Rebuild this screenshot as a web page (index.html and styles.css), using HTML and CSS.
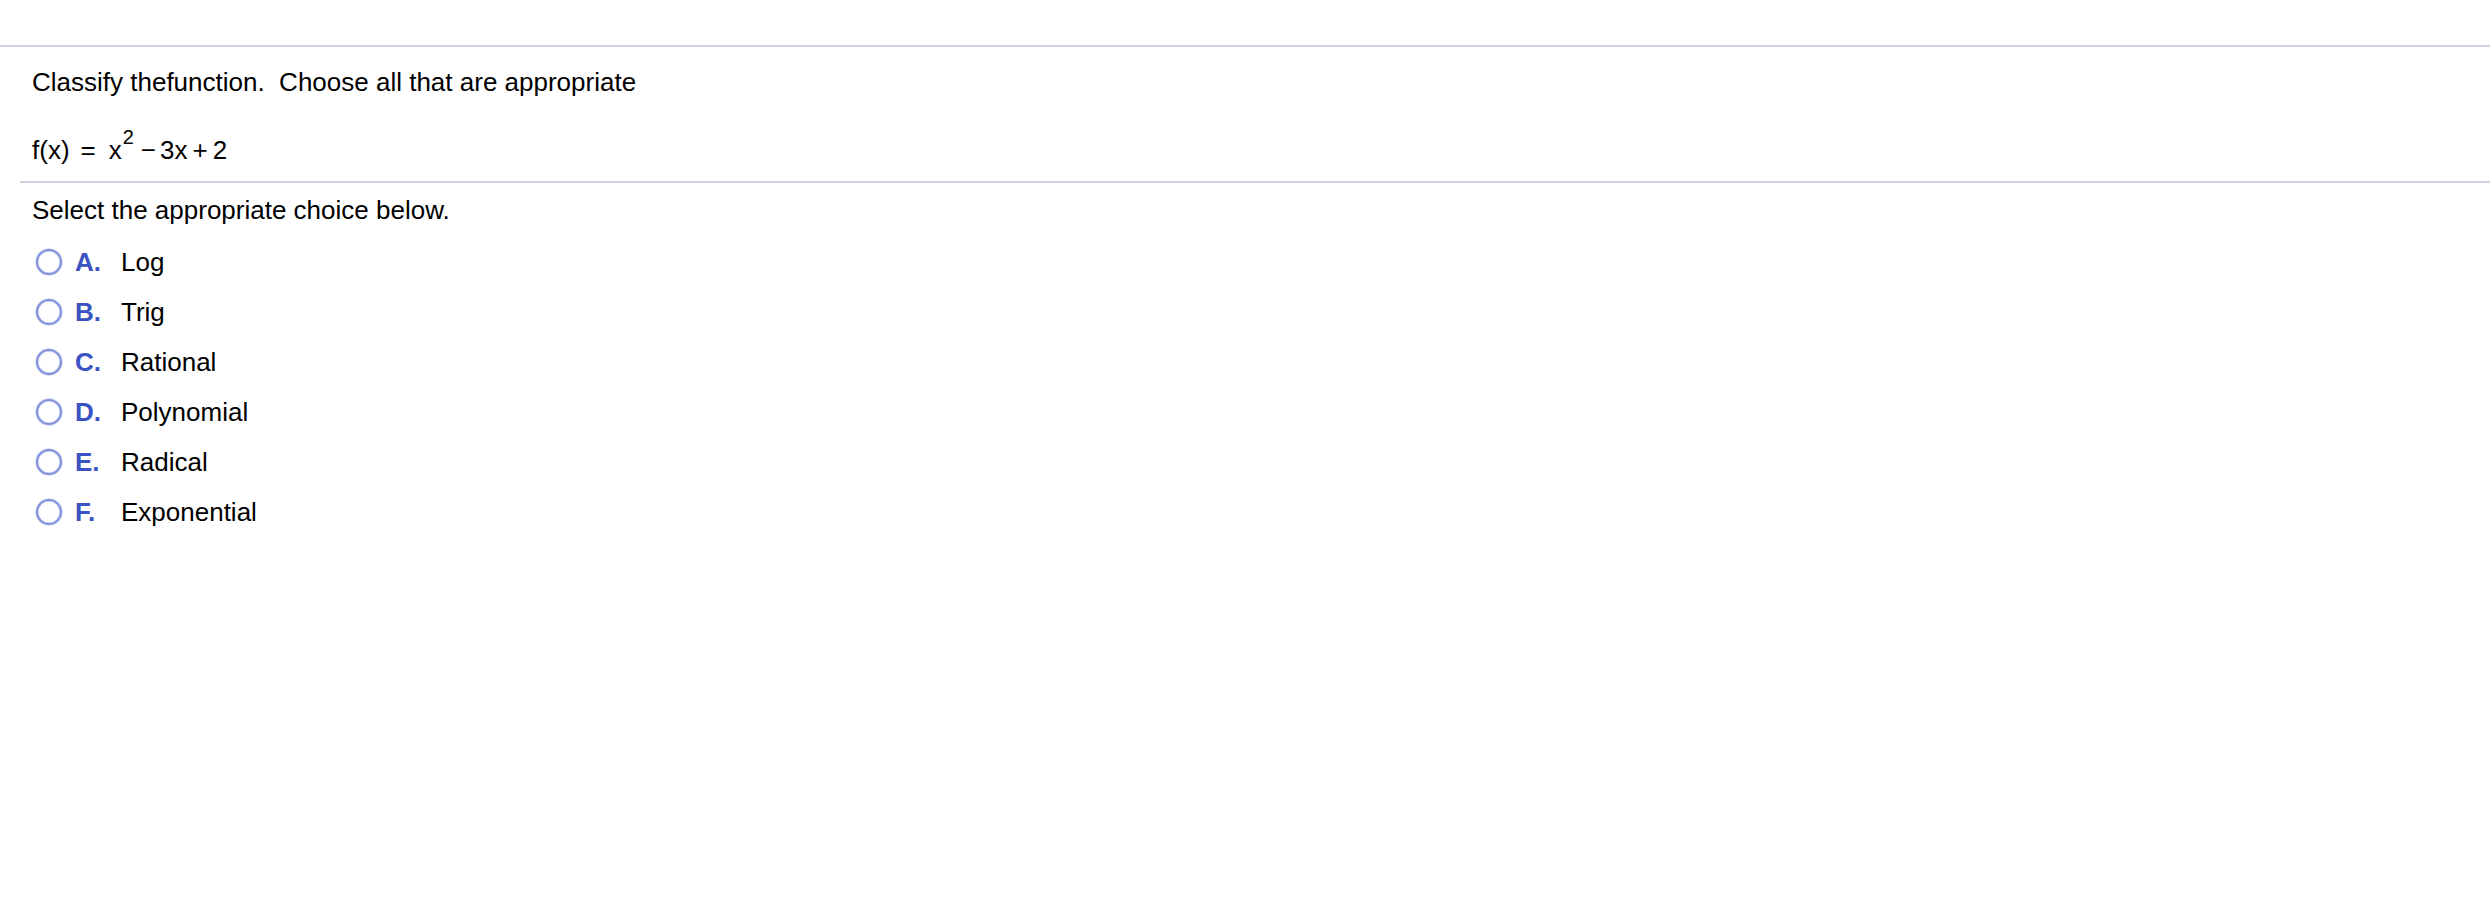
FILE: index.html
```html
<!DOCTYPE html>
<html>
<head>
<meta charset="utf-8">
<link rel="stylesheet" href="styles.css">
</head>
<body>
<div class="rule rule-top"></div>
<div class="question">
  <p class="prompt">Classify thefunction.&nbsp; Choose all that are appropriate</p>
  <p class="formula"><span>f(x)</span><span class="eq">=</span><span class="var">x</span><sup class="sup">2</sup><span class="op">−</span><span class="term">3x</span><span class="op plus">+</span><span>2</span></p>
</div>
<div class="rule rule-inner"></div>
<div class="answers">
  <p class="instruction">Select the appropriate choice below.</p>
  <ul class="choices">
    <li class="choice"><span class="radio"></span><span class="letter">A.</span><span class="text">Log</span></li>
    <li class="choice"><span class="radio"></span><span class="letter">B.</span><span class="text">Trig</span></li>
    <li class="choice"><span class="radio"></span><span class="letter">C.</span><span class="text">Rational</span></li>
    <li class="choice"><span class="radio"></span><span class="letter">D.</span><span class="text">Polynomial</span></li>
    <li class="choice"><span class="radio"></span><span class="letter">E.</span><span class="text">Radical</span></li>
    <li class="choice"><span class="radio"></span><span class="letter">F.</span><span class="text">Exponential</span></li>
  </ul>
</div>
</body>
</html>
```
FILE: styles.css
```css
html, body {
  margin: 0;
  padding: 0;
  background: #ffffff;
}
body {
  font-family: "Liberation Sans", Arial, sans-serif;
  font-size: 26px;
  line-height: 29px;
  color: #000000;
}
p {
  margin: 0;
}
.rule {
  height: 2px;
  background: #cfd2dc;
}
.rule-top {
  margin-top: 45px;
}
.question {
  padding: 21px 0 0 32px;
}
.prompt {
  height: 29px;
}
.formula {
  margin-top: 39px;
  height: 29px;
  display: flex;
  align-items: baseline;
}
.eq {
  margin: 0 13px 0 11px;
}
.sup {
  font-size: 20px;
  line-height: 0;
  position: relative;
  top: -15px;
  margin: 0 7px 0 1px;
}
.op {
  margin: 0 4px 0 0;
}
.plus {
  margin: 0 5px 0 5px;
}
.rule-inner {
  margin: 16px 0 0 20px;
}
.answers {
  padding: 13px 0 0 32px;
}
.instruction {
  height: 29px;
}
.choices {
  list-style: none;
  margin: 12px 0 0 0;
  padding: 0 0 0 4px;
}
.choice {
  height: 50px;
  display: flex;
  align-items: center;
}
.radio {
  width: 22px;
  height: 22px;
  border: 2px solid #8190da;
  border-radius: 50%;
  box-shadow: 0 0 1px 0.5px #b7bfec, inset 0 0 1px 0.5px #b7bfec;
  flex: none;
}
.letter {
  margin-left: 13px;
  width: 46px;
  font-weight: bold;
  color: #3a52c2;
}
.text {
  color: #000000;
}
```
